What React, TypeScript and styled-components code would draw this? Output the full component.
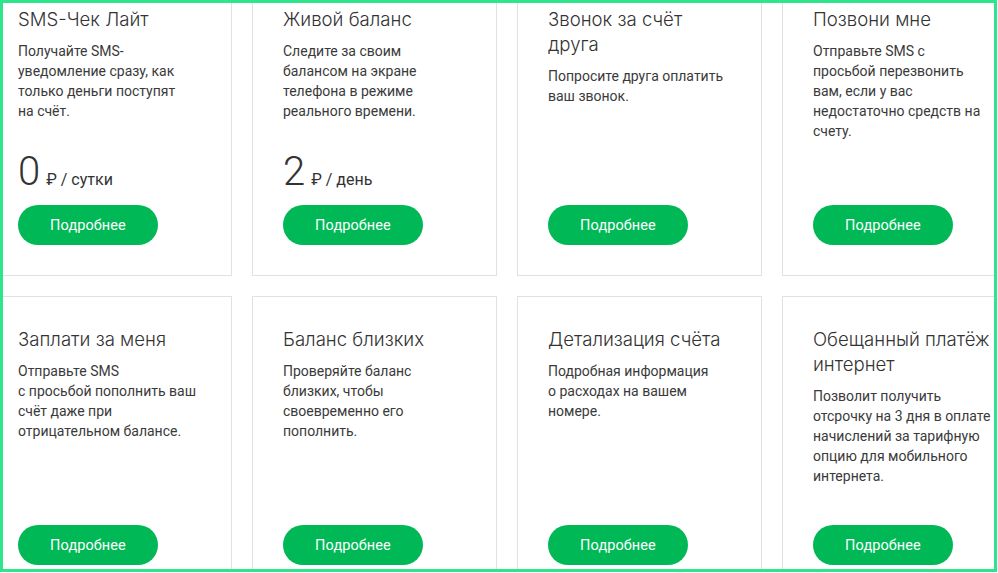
import React from "react";
import styled, { createGlobalStyle } from "styled-components";

const Global = createGlobalStyle`
  html, body { margin: 0; padding: 0; background: #fff; }
  body { font-family: Roboto, "Noto Sans", Arial, sans-serif; color: #333; }
  * { box-sizing: border-box; }
`;

const Frame = styled.div`
  width: 997px;
  height: 572px;
  border: 3px solid #2fe58b;
  overflow: hidden;
  background: #fff;
`;

const Grid = styled.div`
  margin: -27px 0 0 -16px;
  display: grid;
  grid-template-columns: repeat(4, 245px);
  grid-auto-rows: 300px;
  column-gap: 20px;
  row-gap: 20px;
`;

const Card = styled.div`
  border: 1px solid #e1e1e1;
  padding: 30px 10px 30px 30px;
  display: flex;
  flex-direction: column;
  background: #fff;
`;

const Title = styled.div`
  font-family: Inter, Roboto, sans-serif;
  font-size: 18.6px;
  line-height: 25px;
  font-weight: 300;
  color: #333;
  white-space: nowrap;
`;

const Desc = styled.div`
  margin-top: 9px;
  font-size: 14px;
  line-height: 20px;
  color: #3a3a3a;
  white-space: nowrap;
`;

const Price = styled.div`
  margin-top: auto;
  display: flex;
  align-items: baseline;
  gap: 6px;
  margin-bottom: 13px;
`;

const Amount = styled.span`
  font-size: 40px;
  line-height: 40px;
  font-weight: 300;
  color: #333;
`;

const Unit = styled.span`
  font-size: 16px;
  color: #333;
`;

const Button = styled.button<{ $auto: boolean }>`
  margin-top: ${(p) => (p.$auto ? "auto" : "0")};
  width: 140px;
  height: 40px;
  border: none;
  border-radius: 20px;
  background: #00b956;
  color: #fff;
  font-family: inherit;
  font-size: 14.5px;
  letter-spacing: 0.1px;
  cursor: pointer;
  flex-shrink: 0;
`;

type Item = { title: string[]; desc: string[]; price?: [string, string] };

const items: Item[] = [
  {
    title: ["SMS-Чек Лайт"],
    desc: ["Получайте SMS-", "уведомление сразу, как", "только деньги поступят", "на счёт."],
    price: ["0", "₽ / сутки"],
  },
  {
    title: ["Живой баланс"],
    desc: ["Следите за своим", "балансом на экране", "телефона в режиме", "реального времени."],
    price: ["2", "₽ / день"],
  },
  {
    title: ["Звонок за счёт", "друга"],
    desc: ["Попросите друга оплатить", "ваш звонок."],
  },
  {
    title: ["Позвони мне"],
    desc: ["Отправьте SMS с", "просьбой перезвонить", "вам, если у вас", "недостаточно средств на", "счету."],
  },
  {
    title: ["Заплати за меня"],
    desc: ["Отправьте SMS", "с просьбой пополнить ваш", "счёт даже при", "отрицательном балансе."],
  },
  {
    title: ["Баланс близких"],
    desc: ["Проверяйте баланс", "близких, чтобы", "своевременно его", "пополнить."],
  },
  {
    title: ["Детализация счёта"],
    desc: ["Подробная информация", "о расходах на вашем", "номере."],
  },
  {
    title: ["Обещанный платёж", "интернет"],
    desc: ["Позволит получить", "отсрочку на 3 дня в оплате", "начислений за тарифную", "опцию для мобильного", "интернета."],
  },
];

const Lines = ({ lines }: { lines: string[] }) => (
  <>
    {lines.map((l, i) => (
      <React.Fragment key={i}>
        {i > 0 && <br />}
        {l}
      </React.Fragment>
    ))}
  </>
);

export default function App() {
  return (
    <>
      <Global />
      <Frame>
        <Grid>
          {items.map((it, i) => (
            <Card key={i}>
              <Title>
                <Lines lines={it.title} />
              </Title>
              <Desc>
                <Lines lines={it.desc} />
              </Desc>
              {it.price && (
                <Price>
                  <Amount>{it.price[0]}</Amount>
                  <Unit>{it.price[1]}</Unit>
                </Price>
              )}
              <Button $auto={!it.price}>Подробнее</Button>
            </Card>
          ))}
        </Grid>
      </Frame>
    </>
  );
}
